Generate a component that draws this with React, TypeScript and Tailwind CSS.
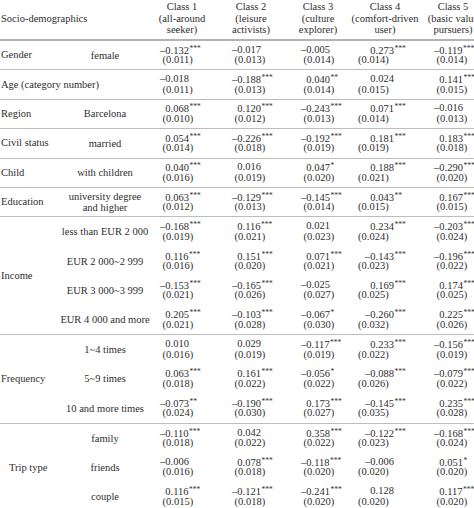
const COLS = [
  { w: 'w-[68px]', pl: 'pl-[12px]', se: 'ml-[2.5px]', head: ['Class 1', '(all-around', 'seeker)'] },
  { w: 'w-[70px]', pl: 'pl-[16px]', se: 'ml-[2.5px]', head: ['Class 2', '(leisure', 'activists)'] },
  { w: 'w-[64px]', pl: 'pl-[15px]', se: 'ml-[2.5px]', head: ['Class 3', '(culture', 'explorer)'] },
  { w: 'w-[70px]', pl: 'pl-[15px]', se: '-ml-[7px]', head: ['Class 4', '(comfort-driven', 'user)'] },
  { w: 'w-[66px]', pl: 'pl-[14px]', se: 'ml-[2.5px]', head: ['Class 5', '(basic value', 'pursuers)'] },
];

type Sub = { label: string[]; cells: string };
type Section = { cat: string; span?: boolean; subs: Sub[] };

// each cell: value+stars|se, cells split by spaces
const DATA: Section[] = [
  { cat: 'Gender', subs: [{ label: ['female'], cells: '-0.132***|0.011 -0.017|0.013 -0.005|0.014 0.273***|0.014 -0.119***|0.014' }] },
  { cat: 'Age (category number)', span: true, subs: [{ label: [], cells: '-0.018|0.011 -0.188***|0.013 0.040**|0.014 0.024|0.015 0.141***|0.015' }] },
  { cat: 'Region', subs: [{ label: ['Barcelona'], cells: '0.068***|0.010 0.120***|0.012 -0.243***|0.013 0.071***|0.014 -0.016|0.013' }] },
  { cat: 'Civil status', subs: [{ label: ['married'], cells: '0.054***|0.014 -0.226***|0.018 -0.192***|0.019 0.181***|0.019 0.183***|0.018' }] },
  { cat: 'Child', subs: [{ label: ['with children'], cells: '0.040***|0.016 0.016|0.019 0.047*|0.020 0.188***|0.021 -0.290***|0.020' }] },
  { cat: 'Education', subs: [{ label: ['university degree', 'and higher'], cells: '0.063***|0.012 -0.129***|0.013 -0.145***|0.014 0.043**|0.015 0.167***|0.015' }] },
  {
    cat: 'Income',
    subs: [
      { label: ['less than EUR 2 000'], cells: '-0.168***|0.019 0.116***|0.021 0.021|0.023 0.234***|0.024 -0.203***|0.024' },
      { label: ['EUR 2 000~2 999'], cells: '0.116***|0.016 0.151***|0.020 0.071***|0.021 -0.143***|0.023 -0.196***|0.022' },
      { label: ['EUR 3 000~3 999'], cells: '-0.153***|0.021 -0.165***|0.026 -0.025|0.027 0.169***|0.025 0.174***|0.025' },
      { label: ['EUR 4 000 and more'], cells: '0.205***|0.021 -0.103***|0.028 -0.067*|0.030 -0.260***|0.032 0.225***|0.026' },
    ],
  },
  {
    cat: 'Frequency',
    subs: [
      { label: ['1~4 times'], cells: '0.010|0.016 0.029|0.019 -0.117***|0.019 0.233***|0.022 -0.156***|0.019' },
      { label: ['5~9 times'], cells: '0.063***|0.018 0.161***|0.022 -0.056*|0.022 -0.088***|0.026 -0.079***|0.022' },
      { label: ['10 and more times'], cells: '-0.073**|0.024 -0.190***|0.030 0.173***|0.027 -0.145***|0.035 0.235***|0.028' },
    ],
  },
  {
    cat: 'Trip type',
    subs: [
      { label: ['family'], cells: '-0.110***|0.018 0.042|0.022 0.358***|0.022 -0.122***|0.023 -0.168***|0.024' },
      { label: ['friends'], cells: '-0.006|0.016 0.078***|0.018 -0.118***|0.020 -0.006|0.020 0.051*|0.020' },
      { label: ['couple'], cells: '0.116***|0.015 -0.121***|0.018 -0.241***|0.020 0.128|0.020 0.117***|0.020' },
    ],
  },
];

function Cell({ raw, col }: { raw: string; col: number }) {
  const [val, se] = raw.split('|');
  const neg = val.startsWith('-');
  const num = val.replace('-', '').replace(/\*+$/, '');
  const stars = val.match(/\*+$/)?.[0] ?? '';
  const c = COLS[col];
  return (
    <div className={`${c.w} ${c.pl} flex flex-col justify-center leading-[10.5px] whitespace-nowrap`}>
      <div className="h-[10.5px]">
        <span className={neg ? '' : 'invisible'}>–</span>
        {num}
        {stars && <span className="text-[7.5px] leading-none align-[3px] ml-[0.5px]">{stars}</span>}
      </div>
      <div className={c.se}>({se})</div>
    </div>
  );
}

function Row({ sub, h }: { sub: Sub; h: string }) {
  const cells = sub.cells.split(' ');
  return (
    <div className={`flex ${h}`}>
      {sub.label.length > 0 && (
        <div className="w-[86px] flex flex-col items-center justify-center text-center leading-[11px] whitespace-nowrap">
          {sub.label.map((l) => (
            <div key={l}>{l}</div>
          ))}
        </div>
      )}
      {cells.map((raw, i) => (
        <Cell key={i} raw={raw} col={i} />
      ))}
    </div>
  );
}

export default function App() {
  return (
    <div
      className="w-[474px] h-[508px] overflow-hidden bg-white text-[#2e2e2e] text-[10.5px]"
      style={{ fontFamily: '"Liberation Serif", "DejaVu Serif", serif' }}
    >
      <div className="w-[486px]">
        <div className="flex h-[41px] border-b-2 border-[#b3b3b3]">
          <div className="w-[148px] pl-[1px] flex items-center pb-[2px]">Socio-demographics</div>
          {COLS.map((c) => (
            <div key={c.head[0]} className={`${c.w} flex flex-col items-center leading-[11.5px] pt-[1px] whitespace-nowrap`}>
              {c.head.map((l) => (
                <div key={l}>{l}</div>
              ))}
            </div>
          ))}
        </div>

        {DATA.map((s) => {
          const single = s.subs.length === 1;
          return (
            <div key={s.cat} className="flex border-b border-[#bdbdbd]">
              {s.span ? (
                <div className="w-[148px] pl-[1px] flex items-center">{s.cat}</div>
              ) : (
                <div className={`w-[62px] flex items-center ${s.cat === 'Trip type' ? 'pl-[9px]' : 'pl-[1px]'}`}>{s.cat}</div>
              )}
              <div className="flex flex-col">
                {s.subs.map((sub, i) => (
                  <Row key={i} sub={sub} h={single ? 'h-[28.4px]' : 'h-[29.2px]'} />
                ))}
              </div>
            </div>
          );
        })}
      </div>
    </div>
  );
}
